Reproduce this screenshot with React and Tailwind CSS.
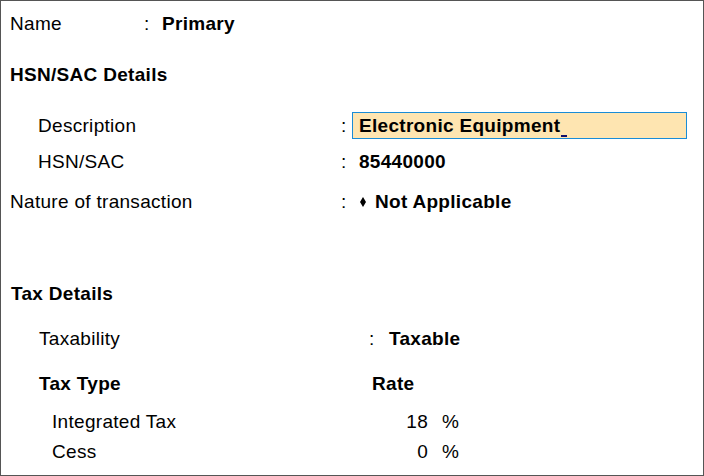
import React from 'react';

const font = { fontFamily: '"Liberation Sans", Arial, sans-serif' };

function Diamond() {
    return (
        <svg width="6" height="10" viewBox="0 0 6 10" className="shrink-0">
            <polygon points="3,0 6,5 3,10 0,5" fill="#000" />
        </svg>
    );
}

export default function App() {
    return (
        <div
            style={font}
            className="w-[704px] h-[476px] border border-[#555555] bg-white text-black text-[19px] tracking-[0.3px] leading-[20px] pt-[13px] overflow-hidden"
        >
            {/* Name */}
            <div className="flex h-[20px] pl-[9px]">
                <div className="w-[134px]">Name</div>
                <div className="w-[18px]">:</div>
                <div className="font-bold">Primary</div>
            </div>

            {/* HSN/SAC Details */}
            <div className="mt-[31px] h-[20px] pl-[9px] font-bold">HSN/SAC Details</div>

            <div className="mt-[27px] flex items-center h-[27px] pl-[37px]">
                <div className="w-[303px]">Description</div>
                <div className="w-[11px]">:</div>
                <div className="w-[335px] h-[27px] flex items-center border border-[#1a8cd6] bg-[#fee5b1] pl-[6px] font-bold">
                    <span>Electronic Equipment</span>
                    <span className="inline-block w-[6px] h-[2px] bg-[#10106a] ml-[1px] translate-y-[10px]"></span>
                </div>
            </div>

            <div className="mt-[13px] flex h-[20px] pl-[37px]">
                <div className="w-[303px]">HSN/SAC</div>
                <div className="w-[11px]">:</div>
                <div className="pl-[7px] font-bold">85440000</div>
            </div>

            <div className="mt-[20px] flex items-center h-[20px] pl-[9px]">
                <div className="w-[331px]">Nature of transaction</div>
                <div className="w-[11px]">:</div>
                <div className="pl-[8px] flex items-center gap-[9px] font-bold">
                    <Diamond />
                    <span>Not Applicable</span>
                </div>
            </div>

            {/* Tax Details */}
            <div className="mt-[72px] h-[20px] pl-[10px] font-bold">Tax Details</div>

            <div className="mt-[25px] flex h-[20px] pl-[38px]">
                <div className="w-[330px]">Taxability</div>
                <div className="w-[20px]">:</div>
                <div className="font-bold">Taxable</div>
            </div>

            <div className="mt-[25px] flex h-[20px] pl-[38px] font-bold">
                <div className="w-[333px]">Tax Type</div>
                <div>Rate</div>
            </div>

            {[
                { name: 'Integrated Tax', rate: '18', mt: 'mt-[18px]' },
                { name: 'Cess', rate: '0', mt: 'mt-[10px]' },
            ].map((t) => (
                <div key={t.name} className={`${t.mt} flex h-[20px] pl-[51px]`}>
                    <div className="w-[316px]">{t.name}</div>
                    <div className="w-[60px] text-right">{t.rate}</div>
                    <div className="ml-[14px]">%</div>
                </div>
            ))}
        </div>
    );
}
